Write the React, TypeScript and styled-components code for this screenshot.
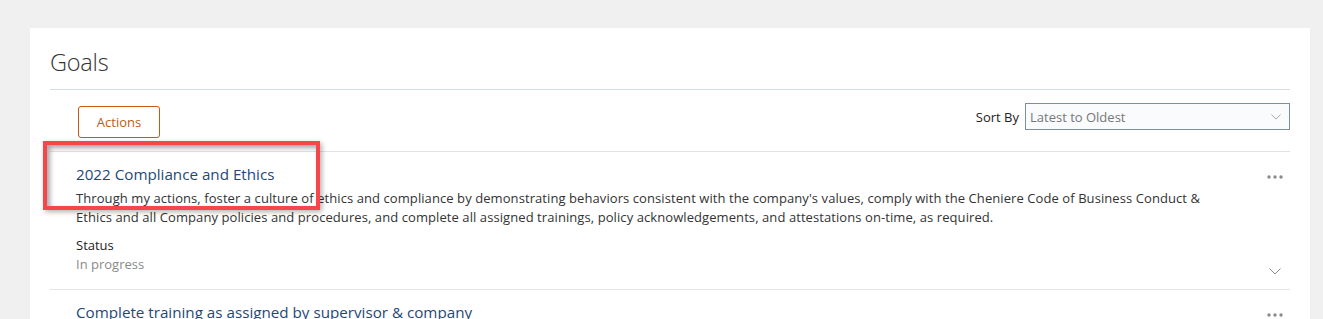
import styled, { createGlobalStyle } from 'styled-components';

const GlobalStyle = createGlobalStyle`
  body {
    margin: 0;
    background: #f0f0f0;
    font-family: 'Open Sans', 'Noto Sans', sans-serif;
    color: #333;
  }
`;

const Page = styled.div`
  position: relative;
  padding: 28px 13px 0 30px;
  height: 319px;
  box-sizing: border-box;
  overflow: hidden;
`;

const Card = styled.section`
  background: #fff;
  padding: 0 20px;
  min-height: 300px;
`;

const Header = styled.header`
  height: 61px;
  display: flex;
  align-items: flex-end;
  border-bottom: 1px solid #d5dce2;
`;

const Title = styled.h1`
  margin: 0 0 11px;
  font-size: 23.5px;
  font-weight: 300;
  color: #333;
  letter-spacing: -0.2px;
`;

const Toolbar = styled.div`
  height: 61px;
  display: flex;
  align-items: center;
  justify-content: space-between;
  padding-left: 28px;
  border-bottom: 1px solid #dfe3e7;
`;

const ActionsButton = styled.button`
  width: 82px;
  height: 32px;
  margin-top: 2px;
  border: 1px solid #c55a11;
  border-radius: 3px;
  background: #fff;
  color: #c55a11;
  font-family: inherit;
  font-size: 13px;
  cursor: pointer;
`;

const SortGroup = styled.div`
  display: flex;
  align-items: center;
  gap: 6px;
  margin-top: -8px;
  font-size: 13px;
  color: #222;
`;

const SortSelect = styled.div`
  width: 265px;
  height: 27px;
  box-sizing: border-box;
  border: 1px solid #7f8f99;
  background: #f9fbfd;
  display: flex;
  align-items: center;
  justify-content: space-between;
  padding: 0 8px 0 4px;
  color: #777;
  font-size: 13px;
`;

const ChevronSlot = styled.span`
  display: flex;
  color: #999;
`;

const GoalItem = styled.article<{ $last?: boolean }>`
  display: grid;
  grid-template-columns: 1fr 30px;
  padding: 0 0 0 26px;
  height: ${(p) => (p.$last ? 'auto' : '137px')};
  border-bottom: ${(p) => (p.$last ? 'none' : '1px solid #e3e6e9')};
`;

const GoalBody = styled.div`
  padding-top: 11px;
  max-width: 1136px;
`;

const GoalTitle = styled.a`
  display: block;
  color: #1f4878;
  font-size: 15.2px;
  line-height: 22px;
  text-decoration: none;
  margin-bottom: 4px;
`;

const GoalText = styled.p`
  margin: 0;
  font-size: 13px;
  line-height: 19px;
  color: #333;
  letter-spacing: 0.08px;
`;

const FieldLabel = styled.div`
  margin-top: 9px;
  font-size: 13px;
  line-height: 19px;
  color: #222;
`;

const FieldValue = styled.div`
  font-size: 13px;
  line-height: 19px;
  color: #8a8a8a;
`;

const SideActions = styled.div`
  display: flex;
  flex-direction: column;
  align-items: center;
  justify-content: space-between;
  padding: 23px 0 14px;
  color: #8b8b8b;
`;

const Highlight = styled.div`
  position: absolute;
  left: 43px;
  top: 141px;
  width: 277px;
  height: 69px;
  box-sizing: border-box;
  border: 4px solid #f7464a;
  box-shadow: inset 3px 3px 5px rgba(0, 0, 0, 0.35), 2px 2px 5px rgba(0, 0, 0, 0.3);
  pointer-events: none;
`;

const Dots = () => (
  <svg width="16" height="4" viewBox="0 0 16 4">
    <circle cx="2" cy="2" r="1.7" fill="currentColor" />
    <circle cx="8" cy="2" r="1.7" fill="currentColor" />
    <circle cx="14" cy="2" r="1.7" fill="currentColor" />
  </svg>
);

const Chevron = ({ size = 12 }: { size?: number }) => (
  <svg width={size} height={size / 2 + 1} viewBox="0 0 12 7" fill="none">
    <path d="M0.5 0.5 L6 6 L11.5 0.5" stroke="currentColor" strokeWidth="1" />
  </svg>
);

const goals = [
  {
    title: '2022 Compliance and Ethics',
    text: "Through my actions, foster a culture of ethics and compliance by demonstrating behaviors consistent with the company's values, comply with the Cheniere Code of Business Conduct & Ethics and all Company policies and procedures, and complete all assigned trainings, policy acknowledgements, and attestations on-time, as required.",
    status: 'In progress',
  },
  {
    title: 'Complete training as assigned by supervisor & company',
    text: '',
    status: '',
  },
];

export default function App() {
  return (
    <>
      <GlobalStyle />
      <Page>
        <Card>
          <Header>
            <Title>Goals</Title>
          </Header>
          <Toolbar>
            <ActionsButton>Actions</ActionsButton>
            <SortGroup>
              <span>Sort By</span>
              <SortSelect>
                <span>Latest to Oldest</span>
                <ChevronSlot>
                  <Chevron size={10} />
                </ChevronSlot>
              </SortSelect>
            </SortGroup>
          </Toolbar>
          {goals.map((g, i) => {
            const last = i === goals.length - 1;
            return (
              <GoalItem key={g.title} $last={last}>
                <GoalBody>
                  <GoalTitle href="#">{g.title}</GoalTitle>
                  {g.text && <GoalText>{g.text}</GoalText>}
                  {g.status && (
                    <>
                      <FieldLabel>Status</FieldLabel>
                      <FieldValue>{g.status}</FieldValue>
                    </>
                  )}
                </GoalBody>
                <SideActions>
                  <Dots />
                  {!last && <Chevron />}
                </SideActions>
              </GoalItem>
            );
          })}
        </Card>
        <Highlight />
      </Page>
    </>
  );
}
